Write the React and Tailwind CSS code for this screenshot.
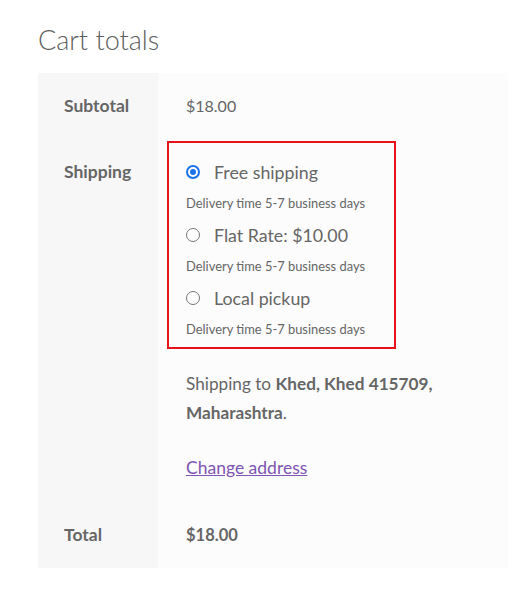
import React from 'react';

const FONT = { fontFamily: '"Source Sans Pro", Lato, "Liberation Sans", sans-serif' };

const Radio = ({ checked }) => (
    checked ? (
        <span className="w-[14px] h-[14px] rounded-full border-2 border-[#1a73e8] flex items-center justify-center shrink-0">
            <span className="w-[6px] h-[6px] rounded-full bg-[#1a73e8]" />
        </span>
    ) : (
        <span className="w-[14px] h-[14px] rounded-full border border-[#767676] bg-white shrink-0" />
    )
);

const OPTIONS = [
    { label: 'Free shipping', checked: true },
    { label: 'Flat Rate: $10.00', checked: false },
    { label: 'Local pickup', checked: false },
];

export default function App() {
    return (
        <div className="w-[530px] h-[589px] bg-white text-[#555] antialiased" style={FONT}>
            <div className="pl-[38px] pt-[22px]">
                <h2 className="text-[27px] font-light leading-[36px] text-[#5e5e5e]">Cart totals</h2>

                <div className="mt-[15px] w-[470px]">
                    {/* Subtotal */}
                    <div className="flex h-[66px]">
                        <div className="w-[120px] bg-[#f7f7f7] pl-[26px] flex items-center text-[17.5px] font-bold text-[#666]">Subtotal</div>
                        <div className="flex-1 bg-[#fcfcfc] pl-[28px] flex items-center text-[16px] text-[#666]">$18.00</div>
                    </div>

                    {/* Shipping */}
                    <div className="flex h-[363px]">
                        <div className="w-[120px] bg-[#f7f7f7] pl-[26px] pt-[21px] text-[17.5px] font-bold text-[#666] leading-[24px]">Shipping</div>
                        <div className="flex-1 bg-[#fcfcfc] pt-[2px]">
                            <div className="ml-[9px] w-[229px] h-[208px] border-2 border-[#e8121b] pl-[17px] pt-[20px]">
                                {OPTIONS.map((o) => (
                                    <div key={o.label} className="h-[63px]">
                                        <div className="flex items-center h-[18px]">
                                            <Radio checked={o.checked} />
                                            <span className="ml-[14px] text-[17.8px] text-[#666]">{o.label}</span>
                                        </div>
                                        <div className="mt-[14px] text-[12.9px] leading-[16px] text-[#666]">Delivery time 5-7 business days</div>
                                    </div>
                                ))}
                            </div>
                            <p className="pl-[28px] pr-[30px] mt-[20px] text-[17.2px] leading-[29px] text-[#666]">
                                Shipping to <strong className="font-bold">Khed, Khed 415709, Maharashtra</strong>.
                            </p>
                            <a href="#" className="block pl-[28px] mt-[26px] text-[17.5px] leading-[29px] text-[#7f54b3] underline">Change address</a>
                        </div>
                    </div>

                    {/* Total */}
                    <div className="flex h-[66px]">
                        <div className="w-[120px] bg-[#f7f7f7] pl-[26px] flex items-center text-[17.5px] font-bold text-[#666]">Total</div>
                        <div className="flex-1 bg-[#fcfcfc] pl-[28px] flex items-center text-[16.5px] font-bold text-[#666]">$18.00</div>
                    </div>
                </div>
            </div>
        </div>
    );
}
